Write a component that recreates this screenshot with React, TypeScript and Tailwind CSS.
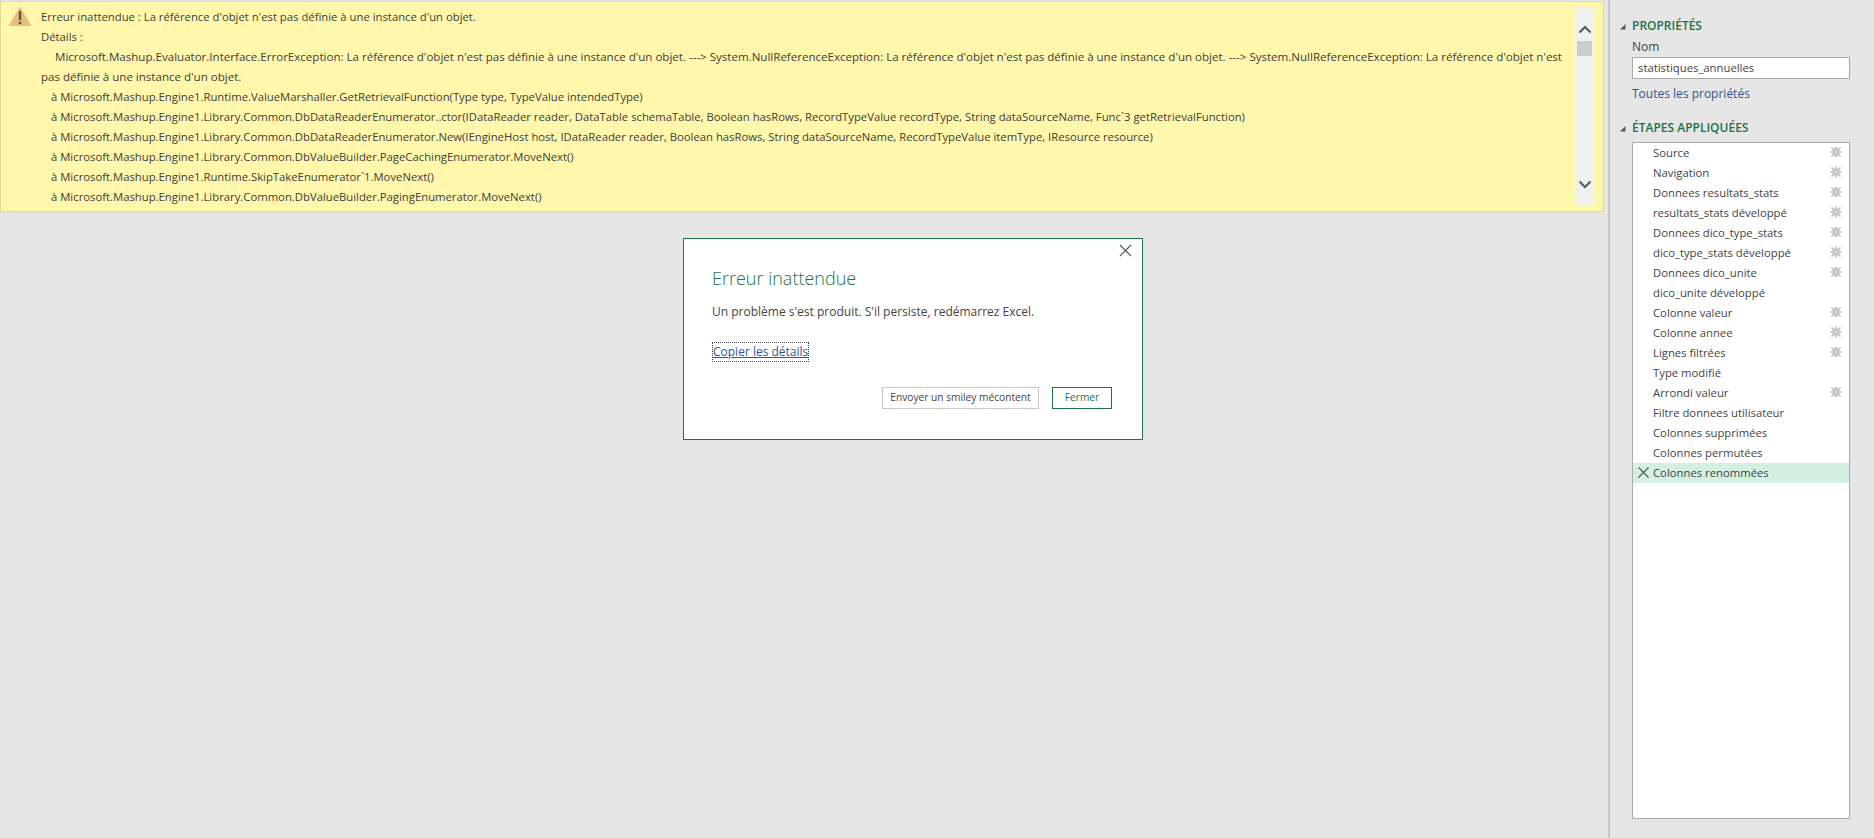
// Power Query error view
const font = "font-['Open_Sans','Noto_Sans',sans-serif]"

const detailLines = [
  'à Microsoft.Mashup.Engine1.Runtime.ValueMarshaller.GetRetrievalFunction(Type type, TypeValue intendedType)',
  "à Microsoft.Mashup.Engine1.Library.Common.DbDataReaderEnumerator..ctor(IDataReader reader, DataTable schemaTable, Boolean hasRows, RecordTypeValue recordType, String dataSourceName, Func`3 getRetrievalFunction)",
  'à Microsoft.Mashup.Engine1.Library.Common.DbDataReaderEnumerator.New(IEngineHost host, IDataReader reader, Boolean hasRows, String dataSourceName, RecordTypeValue itemType, IResource resource)',
  'à Microsoft.Mashup.Engine1.Library.Common.DbValueBuilder.PageCachingEnumerator.MoveNext()',
  'à Microsoft.Mashup.Engine1.Runtime.SkipTakeEnumerator`1.MoveNext()',
  'à Microsoft.Mashup.Engine1.Library.Common.DbValueBuilder.PagingEnumerator.MoveNext()',
]

const steps = [
  { name: 'Source', gear: true },
  { name: 'Navigation', gear: true },
  { name: 'Donnees resultats_stats', gear: true },
  { name: 'resultats_stats développé', gear: true },
  { name: 'Donnees dico_type_stats', gear: true },
  { name: 'dico_type_stats développé', gear: true },
  { name: 'Donnees dico_unite', gear: true },
  { name: 'dico_unite développé', gear: false },
  { name: 'Colonne valeur', gear: true },
  { name: 'Colonne annee', gear: true },
  { name: 'Lignes filtrées', gear: true },
  { name: 'Type modifié', gear: false },
  { name: 'Arrondi valeur', gear: true },
  { name: 'Filtre donnees utilisateur', gear: false },
  { name: 'Colonnes supprimées', gear: false },
  { name: 'Colonnes permutées', gear: false },
  { name: 'Colonnes renommées', gear: false, selected: true },
]

function Gear() {
  return (
    <svg width="12" height="12" viewBox="0 0 12 12" className="mr-[7px] mt-[-2px] shrink-0">
      <rect x="2.5" y="2.5" width="7" height="7" fill="#c6c6c6" />
      <rect x="5" y="0.5" width="2" height="11" fill="#c6c6c6" />
      <rect x="0.5" y="5" width="11" height="2" fill="#c6c6c6" />
      <path d="M1.5 1.5l2 2M10.5 1.5l-2 2M1.5 10.5l2-2M10.5 10.5l-2-2" stroke="#c6c6c6" strokeWidth="1.6" />
      <rect x="5" y="5" width="2" height="2" fill="#e2e2e2" />
    </svg>
  )
}

function SectionTitle({ label }: { label: string }) {
  return (
    <div className="flex h-5 items-center">
      <svg width="7" height="7" viewBox="0 0 7 7" className="ml-[9px] mr-[6px] shrink-0">
        <path d="M6.5 1v5.5H1z" fill="#595959" />
      </svg>
      <span className="text-[12px] font-semibold text-[#217346]">{label}</span>
    </div>
  )
}

export default function App() {
  return (
    <div className={`flex h-[838px] w-[1874px] overflow-hidden bg-[#e6e6e6] text-[#444444] ${font}`}>
      {/* Main area */}
      <div className="w-[1608px] shrink-0">
        {/* Error banner */}
        <div className="mt-px flex h-[211px] w-[1604px] border border-[#dcdc96] bg-[#fff7ab]">
          <svg width="24" height="20" viewBox="0 0 24 20" className="ml-[7px] mt-[4px] shrink-0">
            <path d="M12 0.5L23.5 20H0.5z" fill="#e8bd80" />
            <rect x="10.8" y="5" width="2.4" height="9" fill="#5e5648" />
            <rect x="10.8" y="15.5" width="2.4" height="2.6" fill="#5e5648" />
          </svg>
          <div className="ml-[9px] w-[1536px] pt-[5px] text-[11.3px] leading-[20px] text-[#404040]">
            <div>Erreur inattendue : La référence d'objet n'est pas définie à une instance d'un objet.</div>
            <div>Détails :</div>
            <div className="w-[1530px] indent-[14px] text-[11.55px]">
              Microsoft.Mashup.Evaluator.Interface.ErrorException: La référence d'objet n'est pas définie à une instance d'un objet. ---&gt; System.NullReferenceException: La référence d'objet n'est pas définie à une instance d'un objet. ---&gt; System.NullReferenceException: La référence d'objet n'est pas définie à une instance d'un objet.
            </div>
            {detailLines.map((line) => (
              <div key={line} className="whitespace-nowrap pl-[10px]">{line}</div>
            ))}
          </div>
          {/* Scrollbar */}
          <div className="ml-[-1px] mt-[5px] flex h-[199px] w-[17px] flex-col items-center bg-[#f0f0f0]">
            <svg width="14" height="9" viewBox="0 0 14 9" className="mt-[18px]">
              <path d="M1.5 7.5L7 2l5.5 5.5" fill="none" stroke="#595959" strokeWidth="2" />
            </svg>
            <div className="mt-[7px] h-[15px] w-[15px] bg-[#cdcdcd]" />
            <svg width="14" height="9" viewBox="0 0 14 9" className="mt-[124px]">
              <path d="M1.5 1.5L7 7l5.5-5.5" fill="none" stroke="#595959" strokeWidth="2" />
            </svg>
          </div>
        </div>

        {/* Error dialog */}
        <div className="ml-[683px] mt-[26px] h-[202px] w-[460px] border border-[#217346] bg-white">
          <div className="flex justify-end pr-[10px] pt-[5px]">
            <svg width="13" height="13" viewBox="0 0 13 13">
              <path d="M1 1l11 11M12 1L1 12" stroke="#555555" strokeWidth="1.1" />
            </svg>
          </div>
          <div className="ml-[28px] mt-[8px] text-[18px] font-light leading-[26px] text-[#217346]">Erreur inattendue</div>
          <div className="ml-[28px] mt-[11px] text-[12px] leading-[20px] text-[#444444]">Un problème s'est produit. S'il persiste, redémarrez Excel.</div>
          <div className="ml-[28px] mt-[20px] h-5 w-fit border border-dotted border-[#444444] text-[12px] leading-[18px] text-[#2b579a] underline">Copier les détails</div>
          <div className="mr-[30px] mt-[25px] flex justify-end gap-[13px]">
            <div className="flex h-[22px] w-[157px] items-center justify-center border border-[#c6c6c6] text-[10.2px] text-[#444444]">Envoyer un smiley mécontent</div>
            <div className="flex h-[22px] w-[60px] items-center justify-center border border-[#217346] text-[10.2px] text-[#217346]">Fermer</div>
          </div>
        </div>
      </div>

      {/* Query settings pane */}
      <div className="h-full flex-1 border-l-2 border-[#c6c6c6] pt-[16px]">
        <SectionTitle label="PROPRIÉTÉS" />
        <div className="ml-[22px] mt-px text-[12px] leading-[20px]">Nom</div>
        <div className="ml-[22px] flex h-[22px] w-[218px] items-center border border-[#ababab] bg-white pl-[5px] text-[11.3px] text-[#444444]">statistiques_annuelles</div>
        <div className="ml-[22px] mt-[5px] text-[12px] leading-[20px] text-[#2b579a]">Toutes les propriétés</div>
        <div className="mt-[14px]"><SectionTitle label="ÉTAPES APPLIQUÉES" /></div>
        <div className="ml-[22px] mt-[4px] h-[677px] w-[218px] border border-[#ababab] bg-white">
          {steps.map((step) => (
            <div key={step.name} className={`flex h-5 items-center justify-between pl-[20px] text-[11.3px] ${step.selected ? 'relative bg-[#d3f0e0]' : ''}`}>
              {step.selected && (
                <svg width="11" height="11" viewBox="0 0 11 11" className="absolute left-[5px] top-[4px]">
                  <path d="M0.5 0.5l10 10M10.5 0.5l-10 10" stroke="#555555" strokeWidth="1.1" />
                </svg>
              )}
              <span>{step.name}</span>
              {step.gear && <Gear />}
            </div>
          ))}
        </div>
      </div>
    </div>
  )
}
